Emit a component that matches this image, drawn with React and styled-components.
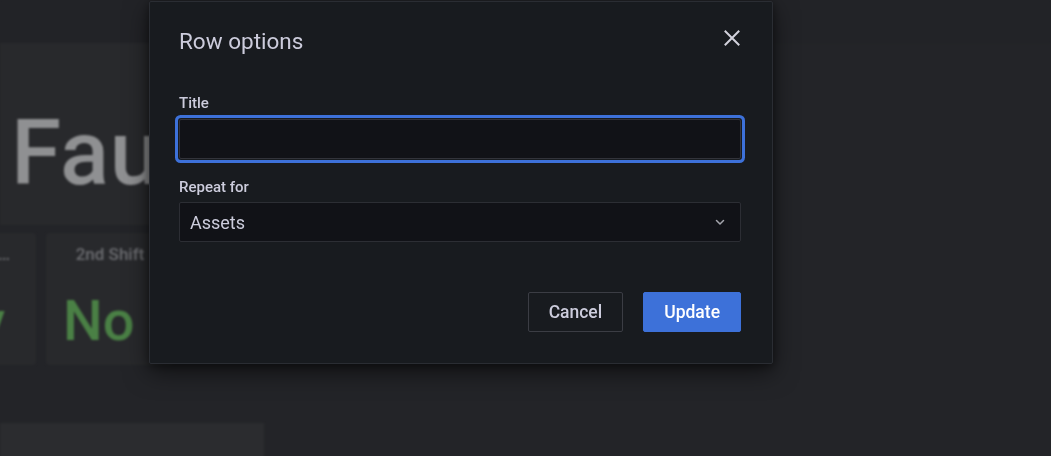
import React from "react";
import styled, { createGlobalStyle } from "styled-components";

const Global = createGlobalStyle`
  html, body { margin: 0; padding: 0; background: #232428; }
  body { font-family: Roboto, "Noto Sans", "Liberation Sans", sans-serif; }
  * { box-sizing: border-box; }
`;

const Page = styled.div`
  position: relative;
  width: 1051px;
  height: 456px;
  overflow: hidden;
  background: #232428;
`;

const Dashboard = styled.div`
  display: flex;
  flex-direction: column;
  height: 100%;
  filter: blur(1.3px);
`;

const TopBar = styled.div`
  flex-shrink: 0;
  height: 43px;
  background: #222327;
`;

const Grid = styled.div`
  flex-shrink: 0;
  display: flex;
  flex-direction: column;
  gap: 8px;
  width: 740px;
`;

const BigPanel = styled.div`
  height: 182px;
  background: #28292c;
  display: flex;
  align-items: center;
  padding-left: 11px;
  padding-top: 38px;
  overflow: hidden;
`;

const BigText = styled.div`
  font-size: 91px;
  font-weight: 500;
  color: #8f9092;
  letter-spacing: 0.5px;
  white-space: nowrap;
`;

const StatRow = styled.div`
  display: flex;
  gap: 10px;
  margin-left: -100px;
`;

const StatPanel = styled.div`
  width: ${(p) => p.$w}px;
  height: 132px;
  background: #28292c;
  border-radius: 3px;
  display: flex;
  flex-direction: column;
  align-items: ${(p) => (p.$end ? "flex-end" : "flex-start")};
  padding: 11px ${(p) => (p.$end ? 26 : 6)}px 0 17px;
  overflow: hidden;
`;

const StatTitle = styled.div`
  align-self: ${(p) => (p.$end ? "flex-end" : "center")};
  margin-left: ${(p) => (p.$end ? 0 : -11)}px;
  font-size: 17px;
  font-weight: 500;
  color: #6c6d71;
  height: 23px;
  white-space: nowrap;
`;

const StatValue = styled.div`
  margin-top: 26px;
  margin-right: ${(p) => (p.$end ? 5 : 0)}px;
  font-size: 56px;
  font-weight: 500;
  color: #4a8045;
  white-space: nowrap;
  line-height: 1;
`;

const Spacer = styled.div`
  height: 42px;
`;

const BottomPanel = styled.div`
  width: 264px;
  height: 40px;
  background: #2b2c2f;
`;

const Modal = styled.div`
  position: absolute;
  left: 149px;
  top: 1px;
  width: 624px;
  background: #181b1f;
  border: 1px solid #2a2d33;
  border-radius: 2px;
  box-shadow: 0 8px 24px rgba(0, 0, 0, 0.55), 0 2px 8px rgba(0, 0, 0, 0.4);
  padding: 0 31px 31px 29px;
  color: #ccccdc;
`;

const Header = styled.div`
  height: 78px;
  display: flex;
  align-items: center;
  justify-content: space-between;
`;

const Title = styled.h2`
  margin: 0;
  font-size: 22.5px;
  font-weight: 400;
  color: #ccccdc;
  line-height: 1;
`;

const CloseButton = styled.button`
  width: 24px;
  height: 24px;
  margin-right: -3px;
  margin-top: -6px;
  padding: 0;
  border: none;
  background: transparent;
  color: #d2d2dc;
  display: flex;
  align-items: center;
  justify-content: center;
  cursor: pointer;
`;

const Content = styled.div`
  padding-top: 14px;
`;

const Field = styled.div`
  display: flex;
  flex-direction: column;
  margin-bottom: ${(p) => p.$mb || 0}px;
`;

const Label = styled.label`
  font-size: 15px;
  line-height: 18px;
  font-weight: 500;
  color: #ccccdc;
  margin-bottom: ${(p) => p.$mb}px;
`;

const Input = styled.input`
  height: 40px;
  width: 100%;
  background: #111217;
  border: 1px solid #32333a;
  border-radius: 2px;
  color: #ccccdc;
  font: inherit;
  font-size: 17px;
  padding: 0 10px;
  outline: none;
  box-shadow: 0 0 0 1px #181b1f, 0 0 0 4px #3d71d9;
`;

const Select = styled.div`
  height: 40px;
  background: #111217;
  border: 1px solid #2c2e34;
  border-radius: 2px;
  display: flex;
  align-items: center;
  justify-content: space-between;
  padding: 0 14px 0 10px;
  font-size: 18px;
  color: #ccccdc;
`;

const Footer = styled.div`
  display: flex;
  justify-content: flex-end;
  gap: 20px;
  margin-top: 50px;
`;

const Button = styled.button`
  height: 40px;
  padding: 0 20px;
  border-radius: 2px;
  font-family: inherit;
  font-size: 17.5px;
  font-weight: 500;
  cursor: pointer;
  border: 1px solid ${(p) => (p.$primary ? "#3d71d9" : "#3b3d44")};
  background: ${(p) => (p.$primary ? "#3d71d9" : "transparent")};
  color: ${(p) => (p.$primary ? "#ffffff" : "#ccccdc")};
`;

const Chevron = () => (
  <svg width="12" height="12" viewBox="0 0 12 12" fill="none">
    <path d="M2.5 4.5 L6 8 L9.5 4.5" stroke="#a4a5ad" strokeWidth="1.5" strokeLinecap="round" strokeLinejoin="round" />
  </svg>
);

const CloseIcon = () => (
  <svg width="16" height="16" viewBox="0 0 16 16" fill="none">
    <path d="M1.5 1.5 L14.5 14.5 M14.5 1.5 L1.5 14.5" stroke="currentColor" strokeWidth="2" strokeLinecap="square" />
  </svg>
);

export default function App() {
  return (
    <>
      <Global />
      <Page>
        <Dashboard>
          <TopBar />
          <Grid>
            <BigPanel>
              <BigText>Faults</BigText>
            </BigPanel>
            <StatRow>
              <StatPanel $w={136} $end>
                <StatTitle $end>1st Shift Fa…</StatTitle>
                <StatValue $end>Any</StatValue>
              </StatPanel>
              <StatPanel $w={128}>
                <StatTitle>2nd Shift</StatTitle>
                <StatValue>No data</StatValue>
              </StatPanel>
            </StatRow>
            <Spacer />
            <BottomPanel />
          </Grid>
        </Dashboard>

        <Modal role="dialog" aria-label="Row options">
          <Header>
            <Title>Row options</Title>
            <CloseButton aria-label="Close">
              <CloseIcon />
            </CloseButton>
          </Header>
          <Content>
            <Field $mb={19}>
              <Label $mb={7}>Title</Label>
              <Input defaultValue="" />
            </Field>
            <Field>
              <Label $mb={6}>Repeat for</Label>
              <Select>
                <span>Assets</span>
                <Chevron />
              </Select>
            </Field>
            <Footer>
              <Button>Cancel</Button>
              <Button $primary>Update</Button>
            </Footer>
          </Content>
        </Modal>
      </Page>
    </>
  );
}
